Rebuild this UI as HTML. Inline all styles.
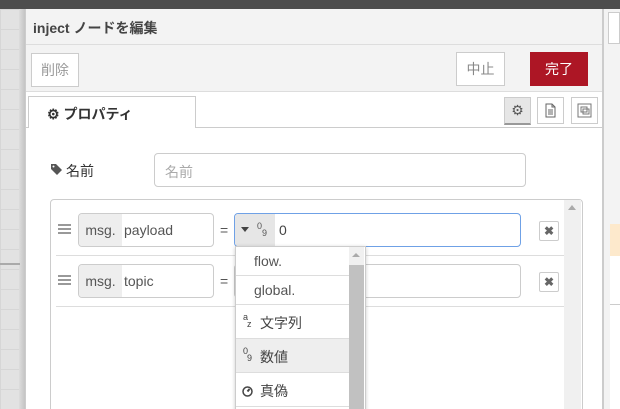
<!DOCTYPE html>
<html><head><meta charset="utf-8"><style>
*{box-sizing:border-box;margin:0;padding:0}
html,body{width:620px;height:409px;overflow:hidden}
body{position:relative;background:#fff;font-family:"Liberation Sans","Noto Sans CJK JP",sans-serif;font-size:14px;color:#555}
.a{position:absolute}
</style></head><body>
<div class="a" style="left:0;top:0;width:620px;height:9px;background:#4d4d4d"></div>
<div class="a" style="left:0;top:9px;width:25px;height:400px;background:#e2e2e2;background-image:linear-gradient(#d6d6d6 1px,transparent 1px),linear-gradient(90deg,#d6d6d6 1px,transparent 1px);background-size:20px 20px"></div>
<div class="a" style="left:19px;top:9px;width:6px;height:400px;background:linear-gradient(90deg,#ddd,#c4c4c4)"></div>
<div class="a" style="left:0;top:263px;width:20px;height:2px;background:#aaa"></div>
<!-- sidebar -->
<div class="a" style="left:603px;top:9px;width:17px;height:400px;background:#f3f3f3;border-left:1px solid #ccc"></div>
<div class="a" style="left:608px;top:12px;width:12px;height:32px;background:#fff;border:1px solid #ccc"></div>
<div class="a" style="left:610px;top:224px;width:10px;height:32px;background:#fde9cc"></div>
<div class="a" style="left:610px;top:256px;width:10px;height:48px;background:#fff"></div>
<div class="a" style="left:610px;top:304px;width:10px;height:105px;background:#fff;border-top:1px solid #ccc"></div>
<!-- dialog -->
<div class="a" style="left:25px;top:9px;width:578px;height:400px;background:#fff;border-left:1px solid #ccc;border-right:1px solid #ccc"></div>
<div class="a" style="left:26px;top:9px;width:576px;height:36px;background:#f3f3f3;border-bottom:1px solid #ddd;font-weight:bold;font-size:14px;color:#444;padding:9px 0 0 7px">inject ノードを編集</div>
<div class="a" style="left:26px;top:45px;width:576px;height:47px;background:#f3f3f3;border-bottom:1px solid #ddd"></div>
<div class="a" style="left:31px;top:53px;width:48px;height:34px;background:#fff;border:1px solid #ccc;color:#999;text-align:center;line-height:32px">削除</div>
<div class="a" style="left:456px;top:52px;width:49px;height:34px;background:#fff;border:1px solid #ccc;color:#888;text-align:center;line-height:32px">中止</div>
<div class="a" style="left:530px;top:52px;width:58px;height:34px;background:#ad1625;color:#fff;text-align:center;line-height:34px">完了</div>
<div class="a" style="left:26px;top:127px;width:576px;height:1px;background:#ccc"></div>
<div class="a" style="left:28px;top:96px;width:168px;height:32px;background:#fff;border:1px solid #ccc;border-bottom:none;font-weight:bold;color:#333;padding:7px 0 0 18px">⚙ プロパティ</div>
<div class="a" style="left:504px;top:97px;width:27px;height:28px;background:#e6e6e6;border:1px solid #ccc;border-bottom:2px solid #999;text-align:center;line-height:24px;color:#555">⚙</div>
<div class="a" style="left:537px;top:97px;width:27px;height:27px;background:#fff;border:1px solid #ccc"><svg width="25" height="25"><path d="M8 6h6l3 3v10H8z M14 6v3h3 M10 12h5 M10 14h5 M10 16h5" fill="none" stroke="#666" stroke-width="1"/></svg></div>
<div class="a" style="left:571px;top:97px;width:27px;height:27px;background:#fff;border:1px solid #ccc"><svg width="25" height="25"><rect x="6" y="6" width="13" height="13" fill="none" stroke="#777"/><rect x="9" y="9" width="6" height="5" fill="none" stroke="#777"/><rect x="11" y="11" width="6" height="5" fill="none" stroke="#777"/></svg></div>
<!-- name -->
<svg class="a" style="left:50px;top:163px" width="13" height="12"><path d="M1 1h5l6 6-5 5-6-6z" fill="#555"/><circle cx="3.5" cy="3.5" r="1" fill="#fff"/></svg>
<div class="a" style="left:66px;top:161px;color:#333">名前</div>
<div class="a" style="left:154px;top:153px;width:372px;height:34px;border:1px solid #ccc;border-radius:4px;color:#aaa;padding:8px 0 0 10px">名前</div>
<!-- props box -->
<div class="a" style="left:50px;top:199px;width:533px;height:215px;border:1px solid #ccc;border-radius:4px"></div>
<div class="a" style="left:564px;top:200px;width:17px;height:209px;background:#f0f0f0"></div>
<div class="a" style="left:568px;top:205px;width:0;height:0;border-left:4px solid transparent;border-right:4px solid transparent;border-bottom:5px solid #aaa"></div>
<div class="a" style="left:56px;top:255px;width:508px;height:1px;background:#ddd"></div>
<div class="a" style="left:56px;top:306px;width:508px;height:1px;background:#ddd"></div>
<div class="a" style="left:58px;top:224px;width:13px;height:10px;border-top:2px solid #999;border-bottom:2px solid #999"><div style="margin-top:2px;height:2px;background:#999"></div></div>
<div class="a" style="left:58px;top:275px;width:13px;height:10px;border-top:2px solid #999;border-bottom:2px solid #999"><div style="margin-top:2px;height:2px;background:#999"></div></div>
<div class="a" style="left:78px;top:213px;width:136px;height:34px;border:1px solid #ccc;border-radius:4px;overflow:hidden;background:#fff"><span style="display:inline-block;width:43px;height:32px;background:#eee;text-align:center;line-height:32px;color:#555">msg.</span><span style="color:#555;padding-left:2px">payload</span></div>
<div class="a" style="left:78px;top:264px;width:136px;height:34px;border:1px solid #ccc;border-radius:4px;overflow:hidden;background:#fff"><span style="display:inline-block;width:43px;height:32px;background:#eee;text-align:center;line-height:32px;color:#555">msg.</span><span style="color:#555;padding-left:2px">topic</span></div>
<div class="a" style="left:220px;top:222px;color:#555">=</div>
<div class="a" style="left:220px;top:273px;color:#555">=</div>
<div class="a" style="left:234px;top:264px;width:287px;height:34px;border:1px solid #ccc;border-radius:4px"></div>
<div class="a" style="left:234px;top:213px;width:287px;height:34px;border:1px solid #6fa1e6;border-radius:4px;overflow:hidden;background:#fff"><div style="position:absolute;left:0;top:0;width:40px;height:32px;background:#e6e6e6"></div><div style="position:absolute;left:6px;top:13px;border-left:4px solid transparent;border-right:4px solid transparent;border-top:5px solid #444"></div><div style="position:absolute;left:22px;top:7px;font-size:9px;color:#555">0</div><div style="position:absolute;left:27px;top:14px;font-size:9px;color:#555">9</div><div style="position:absolute;left:44px;top:8px;color:#444">0</div></div>
<div class="a" style="left:539px;top:221px;width:20px;height:20px;border:1px solid #ccc;border-radius:2px;text-align:center;line-height:18px;color:#666;font-size:12px;font-weight:bold">✖</div>
<div class="a" style="left:539px;top:272px;width:20px;height:20px;border:1px solid #ccc;border-radius:2px;text-align:center;line-height:18px;color:#666;font-size:12px;font-weight:bold">✖</div>
<!-- dropdown -->
<div class="a" style="left:235px;top:246px;width:131px;height:170px;background:#fff;border:1px solid #ccc;box-shadow:0 1px 4px rgba(0,0,0,.2)">
<div style="position:absolute;right:1px;top:0;width:15px;height:170px;background:#f0f0f0"></div>
<div style="position:absolute;right:1px;top:18px;width:15px;height:160px;background:#c1c1c1"></div>
<div style="position:absolute;right:5px;top:6px;border-left:4px solid transparent;border-right:4px solid transparent;border-bottom:4px solid #aaa"></div>
<div style="position:absolute;left:0;top:0;width:113px;height:29px;border-bottom:1px solid #ddd;padding:6px 0 0 18px;color:#555">flow.</div>
<div style="position:absolute;left:0;top:29px;width:113px;height:29px;border-bottom:1px solid #ddd;padding:6px 0 0 18px;color:#555">global.</div>
<div style="position:absolute;left:0;top:58px;width:113px;height:34px;border-bottom:1px solid #ddd;padding:8px 0 0 24px;color:#444">文字列<span style="position:absolute;left:7px;top:7px;font-size:9px">a</span><span style="position:absolute;left:11px;top:14px;font-size:9px">z</span></div>
<div style="position:absolute;left:0;top:92px;width:113px;height:34px;background:#eee;border-bottom:1px solid #ddd;padding:8px 0 0 24px;color:#444">数値<span style="position:absolute;left:7px;top:7px;font-size:9px">0</span><span style="position:absolute;left:11px;top:14px;font-size:9px">9</span></div>
<div style="position:absolute;left:0;top:126px;width:113px;height:34px;border-bottom:1px solid #ddd;padding:8px 0 0 24px;color:#444">真偽<svg style="position:absolute;left:6px;top:13px" width="11" height="11"><circle cx="5.5" cy="5.5" r="4.5" fill="none" stroke="#444" stroke-width="1.5"/><path d="M5.5 5.5L7.5 3" stroke="#444" stroke-width="2"/></svg></div>
</div>
</body></html>
